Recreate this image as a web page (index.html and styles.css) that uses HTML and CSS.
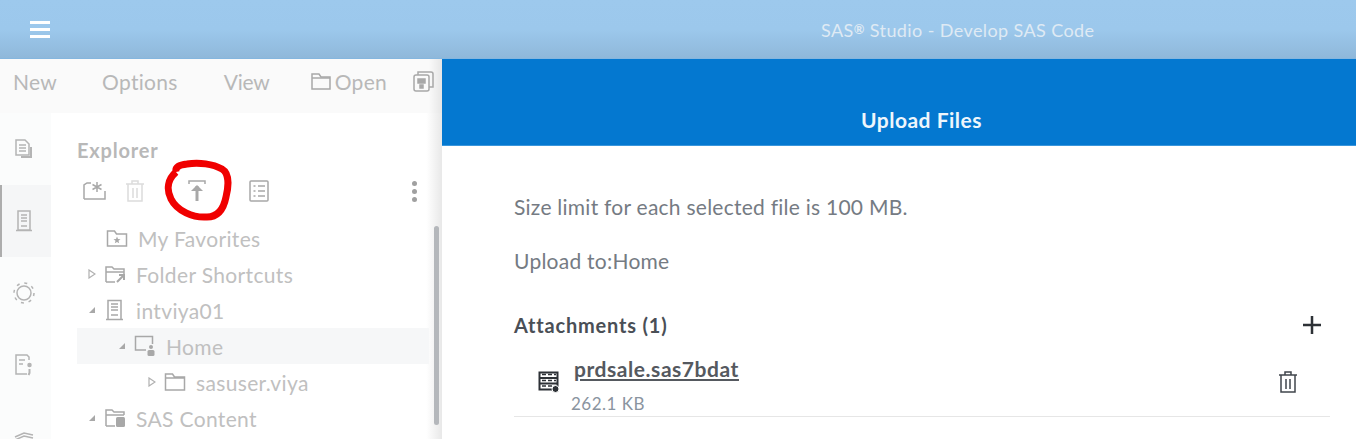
FILE: index.html
```html
<!DOCTYPE html>
<html lang="en">

<head>
    <meta charset="UTF-8">
    <title>SAS Studio - Develop SAS Code</title>
    <link rel="stylesheet" href="styles.css">
</head>

<body>
    <div class="app">
        <header class="topbar">
            <div class="burger"><span></span><span></span><span></span></div>
            <div class="app-title">SAS<span class="reg">®</span> Studio - Develop SAS Code</div>
        </header>

        <div class="main">
            <div class="left">
                <div class="menubar">
                    <span class="menu-new">New</span>
                    <span class="menu-options">Options</span>
                    <span class="menu-view">View</span>
                    <span class="menu-open">
                        <svg width="22" height="20" viewBox="0 0 22 20" class="gi"><path d="M2 18V3h7l2 3h9v12z" /><path d="M2 7h18" /></svg>
                        Open
                    </span>
                    <svg width="24" height="24" viewBox="0 0 24 24" class="gi menu-win"><rect x="2" y="6" width="15" height="16" rx="2" /><path d="M6 6V3h13a2 2 0 0 1 2 2v13h-4" /><rect x="6" y="10" width="7" height="4" fill="#a8a8a8" /><rect x="8" y="16" width="3" height="3" fill="#a8a8a8" /></svg>
                </div>

                <div class="workspace">
                    <nav class="rail">
                        <div class="rail-item">
                            <svg width="20" height="22" viewBox="0 0 20 22" class="gi"><path d="M2 2h9l4 4v11H2z" /><path d="M5 7h7M5 10h7M5 13h7" /><path d="M17 9v10H7" stroke-width="2" /></svg>
                        </div>
                        <div class="rail-item active">
                            <svg width="18" height="24" viewBox="0 0 18 24" class="gi"><path d="M3 2h12v19H3zM1 21.500h16M6 6h6M6 9h6M6 12h6M6 17h6" /></svg>
                        </div>
                        <div class="rail-item">
                            <svg width="24" height="24" viewBox="0 0 24 24" class="gi"><circle cx="12" cy="12" r="7" /><circle cx="12" cy="12" r="10" stroke-dasharray="3 4.850" /></svg>
                        </div>
                        <div class="rail-item">
                            <svg width="20" height="24" viewBox="0 0 20 24" class="gi"><path d="M13 21H2V2h11l2 2v3M5 7h6M5 11h4" /><circle cx="15.500" cy="12" r="1.500" fill="#a8a8a8" /><path d="M15.500 16v4l-1 2" stroke-width="2" /></svg>
                        </div>
                        <div class="rail-item">
                            <svg width="22" height="20" viewBox="0 0 22 20" class="gi"><path d="M2 10l9-4 9 2M2 13l9-4 9 2M1 17h20v3H1z" /></svg>
                        </div>
                    </nav>

                    <section class="explorer">
                        <h2 class="explorer-title">Explorer</h2>
                        <div class="tools">
                            <svg width="26" height="24" viewBox="0 0 26 24" class="gi tool-new"><path d="M2 20V6l3-2h4M2 20h21v-8" /><path d="M15 3v10M10.500 5.500l9 5M19.500 5.500l-9 5" /></svg>
                            <svg width="20" height="24" viewBox="0 0 20 24" class="gi tool-del"><path d="M1 5h18M7 5V2h6v3M3 5v17h14V5M8 9v10M12 9v10" /></svg>
                            <svg width="22" height="24" viewBox="0 0 22 24" class="gi tool-up"><path d="M3 5V2h16v3" /><path d="M11 22V7" stroke-width="3" /><path d="M5 12l6-6 6 6z" fill="#a8a8a8" stroke="none" /></svg>
                            <svg width="20" height="22" viewBox="0 0 20 22" class="gi tool-list"><rect x="1" y="1" width="18" height="20" rx="1" /><path d="M4.500 6h2M9 6h7M4.500 11h2M9 11h7M4.500 16h2M9 16h7" stroke-width="1.600" /></svg>
                            <div class="dots"><span></span><span></span><span></span></div>
                        </div>

                        <ul class="tree">
                            <li class="lvl-fav">
                                <svg width="22" height="20" viewBox="0 0 22 20" class="gi"><path d="M1.500 18V3h7l2 3h10v12z" /><path d="M11 8.500l1 2.500 2.500.2-2 1.600.7 2.500-2.200-1.400-2.200 1.400.7-2.500-2-1.600 2.500-.2z" fill="#a8a8a8" stroke="none" /></svg>
                                <span class="tree-text">My Favorites</span>
                            </li>
                            <li class="lvl-0">
                                <svg width="8" height="10" viewBox="0 0 8 10" class="arrow"><path d="M1 1l6 4-6 4z" /></svg>
                                <svg width="22" height="20" viewBox="0 0 22 20" class="gi"><path d="M2 18V3h6l2 2h10v3M2 8h18" /><path d="M2 18h9M20 8v5" /><path d="M13 18l6-6M15 11h5v5" stroke-width="2" /></svg>
                                <span class="tree-text">Folder Shortcuts</span>
                            </li>
                            <li class="lvl-0">
                                <svg width="8" height="10" viewBox="0 0 8 10" class="arrow open"><path d="M7 2v6H1z" /></svg>
                                <svg width="22" height="22" viewBox="-1 0 22 22" class="gi"><path d="M3 1.500h13v19H3zM1 20.500h17M6 5h7M6 8h7M6 11h7M6 16h7" /></svg>
                                <span class="tree-text">intviya01</span>
                            </li>
                            <li class="lvl-1 selected">
                                <svg width="8" height="10" viewBox="0 0 8 10" class="arrow open"><path d="M7 2v6H1z" /></svg>
                                <svg width="22" height="22" viewBox="0 0 22 22" class="gi"><path d="M12 15H1.500V1.500h17V9" /><circle cx="17" cy="12" r="2" fill="#a8a8a8" stroke="none" /><rect x="13.500" y="15" width="7" height="6" rx="1.500" fill="#a8a8a8" stroke="none" /></svg>
                                <span class="tree-text">Home</span>
                            </li>
                            <li class="lvl-2">
                                <svg width="8" height="10" viewBox="0 0 8 10" class="arrow"><path d="M1 1l6 4-6 4z" /></svg>
                                <svg width="22" height="20" viewBox="0 0 22 20" class="gi"><path d="M1.500 18V2h7l2 3h10v13zM1.500 6h19" /></svg>
                                <span class="tree-text">sasuser.viya</span>
                            </li>
                            <li class="lvl-0">
                                <svg width="8" height="10" viewBox="0 0 8 10" class="arrow open"><path d="M7 2v6H1z" /></svg>
                                <svg width="22" height="22" viewBox="0 0 22 22" class="gi"><path d="M2 19V3h6l2 2h10v3M2 8h18M2 19h9" /><rect x="12" y="10" width="9" height="10" rx="1.500" fill="#a8a8a8" stroke="none" /></svg>
                                <span class="tree-text">SAS Content</span>
                            </li>
                        </ul>
                        <div class="scrollbar"></div>
                    </section>
                </div>
            </div>

            <div class="dialog">
                <div class="dialog-head">Upload Files</div>
                <div class="dialog-body">
                    <p class="note">Size limit for each selected file is 100 MB.</p>
                    <p class="note target">Upload to:Home</p>
                    <div class="attach-head">
                        <span class="attach-title">Attachments (1)</span>
                        <svg width="20" height="20" viewBox="0 0 20 20" class="add"><path d="M10 1v18M1 10h18" /></svg>
                    </div>
                    <div class="file-row">
                        <svg width="24" height="24" viewBox="0 0 24 24" class="file-icon">
                            <path d="M2.500 1.500h18v17h-18zM2.500 7h18M2.500 12.500h18" fill="#fff" stroke="#2d3136" stroke-width="2" />
                            <path d="M5 3.500h4M11 3.500h4M17 3.500h2M5 9.500h4M11 9.500h4M17 9.500h2M5 15h4M11 15h4" stroke="#2d3136" stroke-width="1.500" />
                            <circle cx="18.500" cy="18" r="3.500" fill="#2d3136" stroke="#fff" />
                        </svg>
                        <div class="file-info">
                            <a class="file-name" href="#">prdsale.sas7bdat</a>
                            <div class="file-size">262.1 KB</div>
                        </div>
                        <svg width="20" height="24" viewBox="0 0 20 24" class="file-del"><path d="M1 5h18M7 5V2h6v3M3 5v17h14V5M8 9v10M12 9v10" /></svg>
                    </div>
                </div>
            </div>
        </div>
    </div>

    <!-- hand drawn mark over the upload button -->
    <svg class="scribble" width="70" height="64" viewBox="0 0 70 64">
        <path d="M13 13C12 8 16 6 24 5C36 3 50 5 59 10C66 14 66 26 63 38C61 48 56 58 44 58C30 59 14 52 8 40C3 30 5 20 13 13" />
    </svg>
</body>

</html>
```

FILE: styles.css
```css
* {
    margin: 0;
    padding: 0;
    box-sizing: border-box;
}

html,
body {
    height: 439px;
    overflow: hidden;
    background: #fff;
}

body {
    position: relative;
    font-family: Lato, "Open Sans", sans-serif;
    color: #a8a8a8;
}

.app {
    display: flex;
    flex-direction: column;
    height: 439px;
}

.gi {
    fill: none;
    stroke: #a8a8a8;
    stroke-width: 1.5;
    flex: none;
}

/* top bar */
.topbar {
    height: 59px;
    flex: none;
    display: flex;
    align-items: center;
    background: linear-gradient(#9dc9ed, #9cc8ec 50%, #8fb8da);
    border-bottom: 1px solid #84b6df;
}

.burger {
    width: 20px;
    margin-left: 30px;
    display: flex;
    flex-direction: column;
    gap: 4px;
}

.burger span {
    height: 3px;
    background: #fff;
}

.app-title {
    margin-left: 771px;
    padding-top: 2px;
    font-size: 18px;
    letter-spacing: .4px;
    color: #dfeaf4;
}

.reg {
    font-size: 13px;
    font-weight: 700;
    vertical-align: 3px;
}

/* layout under the bar */
.main {
    flex: 1;
    display: flex;
    min-height: 0;
}

.left {
    width: 442px;
    flex: none;
    display: flex;
    flex-direction: column;
}

.menubar {
    height: 54px;
    flex: none;
    display: flex;
    align-items: center;
    padding-bottom: 10px;
    background: linear-gradient(90deg, #fafafa 97%, #e6e6e6);
    font-size: 21px;
    letter-spacing: .3px;
    color: #b8b8b8;
}

.menu-new {
    margin-left: 13px;
}

.menu-options {
    margin-left: 45px;
}

.menu-view {
    margin-left: 46px;
    letter-spacing: -.2px;
}

.menu-open {
    margin-left: 40px;
    display: flex;
    align-items: center;
    gap: 3px;
}

.menu-win {
    margin-left: 25px;
}

.workspace {
    flex: 1;
    display: flex;
    min-height: 0;
    overflow: hidden;
}

.rail {
    width: 51px;
    flex: none;
    background: #fbfcfc;
}

.rail-item {
    height: 72px;
    display: flex;
    align-items: center;
    justify-content: center;
    padding-right: 3px;
    opacity: .85;
}

.rail-item.active {
    background: #f4f5f7;
    border-left: 2px solid #a0a0a0;
    padding-right: 5px;
}

.explorer {
    flex: 1;
    position: relative;
    padding: 25px 0 0 26px;
    background: linear-gradient(90deg, #fff 96%, #e8e8e8);
}

.explorer-title {
    font-size: 20px;
    font-weight: 700;
    line-height: 24px;
    letter-spacing: .8px;
    color: #b8b8b8;
}

.tools {
    height: 32px;
    margin-top: 13px;
    display: flex;
    align-items: center;
}

.tool-new {
    margin-left: 5px;
}

.tool-del {
    margin-left: 17px;
    opacity: .4;
}

.tool-up {
    margin-left: 41px;
}

.tool-list {
    margin-left: 41px;
}

.dots {
    margin-left: 143px;
    display: flex;
    flex-direction: column;
    gap: 3px;
}

.dots span {
    width: 5px;
    height: 5px;
    border-radius: 50%;
    background: #a0a0a0;
}

.tree {
    list-style: none;
    margin-top: 13px;
    width: 352px;
    font-size: 21px;
    letter-spacing: .35px;
    color: #c0c0c0;
}

.tree li {
    height: 36px;
    display: flex;
    align-items: center;
}

.lvl-fav {
    padding-left: 29px;
}

.lvl-0 {
    padding-left: 11px;
}

.lvl-1 {
    padding-left: 41px;
}

.lvl-2 {
    padding-left: 71px;
}

.tree li.selected {
    background: #f6f7f8;
}

.tree-text {
    margin-left: 10px;
}

.arrow {
    margin-right: 8px;
    flex: none;
    fill: #fff;
    stroke: #b0b0b0;
    stroke-width: 1.2;
}

.arrow.open {
    fill: #a8a8a8;
    stroke: none;
}

.scrollbar {
    position: absolute;
    top: 113px;
    right: 3px;
    width: 5px;
    height: 199px;
    border-radius: 3px;
    background: #b4b7bb;
}

/* upload dialog */
.dialog {
    flex: 1;
    min-width: 0;
    display: flex;
    flex-direction: column;
}

.dialog-head {
    height: 87px;
    flex: none;
    padding: 48px 0 0 419px;
    background: #0478d0;
    border-bottom: 1px solid #3a96dc;
    font-size: 21px;
    font-weight: 700;
    line-height: 26px;
    letter-spacing: .5px;
    color: #eef6fc;
}

.dialog-body {
    flex: 1;
    padding: 0 26px 0 72px;
    color: #757b83;
}

.note {
    font-size: 21px;
    line-height: 26px;
    letter-spacing: .25px;
    margin-top: 48px;
}

.target {
    margin-top: 28px;
}

.attach-head {
    margin-top: 38px;
    display: flex;
    align-items: center;
    justify-content: space-between;
    height: 26px;
    padding-right: 8px;
}

.attach-title {
    font-size: 20px;
    font-weight: 700;
    letter-spacing: .8px;
    color: #4a4f56;
}

.add {
    fill: none;
    stroke: #2d3136;
    stroke-width: 2.500;
}

.file-row {
    height: 79px;
    display: flex;
    align-items: flex-start;
    border-bottom: 1px solid #e6e6e6;
}

.file-icon {
    margin: 33px 0 0 23px;
    flex: none;
}

.file-info {
    flex: 1;
    margin-left: 13px;
}

.file-name {
    display: block;
    margin-top: 18px;
    font-size: 21px;
    font-weight: 700;
    line-height: 26px;
    letter-spacing: .55px;
    color: #55595f;
}

.file-size {
    margin: 11px 0 0 -3px;
    font-size: 17px;
    line-height: 22px;
    letter-spacing: .5px;
    color: #8a94a0;
}

.file-del {
    margin: 32px 32px 0 0;
    fill: none;
    stroke: #40454c;
    stroke-width: 1.500;
}

/* red mark */
.scribble {
    position: absolute;
    left: 163px;
    top: 159px;
    fill: none;
    stroke: #f00000;
    stroke-width: 7;
    stroke-linejoin: round;
}
```
